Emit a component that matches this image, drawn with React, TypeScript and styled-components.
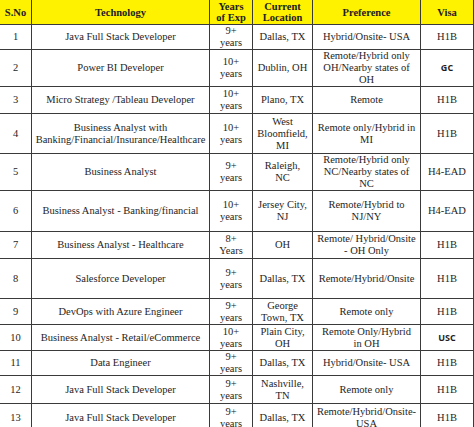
import React from 'react';
import styled, { createGlobalStyle } from 'styled-components';

const SERIF = `'Liberation Serif', serif`;
const SANS = `'Open Sans', 'Liberation Sans', sans-serif`;

const GlobalStyle = createGlobalStyle`
  html, body {
    margin: 0;
    padding: 0;
    background: #ffffff;
  }
  body {
    font-family: ${SERIF};
  }
`;

const Sheet = styled.table`
  border-collapse: collapse;
  table-layout: fixed;
  width: 474px;
  margin-left: -1px;
  margin-top: -1px;
  color: #1e1e1e;
  font-family: ${SERIF};
  font-size: 10.5px;
  line-height: 12px;
`;

const HeadCell = styled.th`
  background: #fff200;
  border: 1px solid #3a3a3a;
  font-family: ${SERIF};
  font-weight: 700;
  font-size: 10.5px;
  line-height: 11px;
  color: #202020;
  text-align: center;
  vertical-align: middle;
  padding: 0;
  white-space: nowrap;
`;

const Row = styled.tr<{ $h: number }>`
  height: ${p => p.$h}px;
`;

const Cell = styled.td<{ $sans?: boolean }>`
  border: 1px solid #3a3a3a;
  text-align: center;
  vertical-align: middle;
  padding: 0;
  white-space: nowrap;
  overflow: hidden;
  color: #1e1e1e;
  line-height: 12px;
  font-family: ${p => (p.$sans ? SANS : SERIF)};
  font-weight: ${p => (p.$sans ? 700 : 400)};
  font-size: ${p => (p.$sans ? '9px' : '10.5px')};
`;

type Job = {
  h: number;
  tech: string[];
  years: string;
  loc: string[];
  pref: string[];
  visa: string;
  sans?: boolean;
};

const jobs: Job[] = [
  { h: 25, tech: ['Java Full Stack Developer'], years: 'years', loc: ['Dallas, TX'], pref: ['Hybrid/Onsite- USA'], visa: 'H1B' },
  { h: 37, tech: ['Power BI Developer'], years: 'years', loc: ['Dublin, OH'], pref: ['Remote/Hybrid only', 'OH/Nearby states of', 'OH'], visa: 'GC', sans: true },
  { h: 27, tech: ['Micro Strategy /Tableau Developer'], years: 'years', loc: ['Plano, TX'], pref: ['Remote'], visa: 'H1B' },
  { h: 40, tech: ['Business Analyst with', 'Banking/Financial/Insurance/Healthcare'], years: 'years', loc: ['West', 'Bloomfield,', 'MI'], pref: ['Remote only/Hybrid in', 'MI'], visa: 'H1B' },
  { h: 36, tech: ['Business Analyst'], years: 'years', loc: ['Raleigh,', 'NC'], pref: ['Remote/Hybrid only', 'NC/Nearby states of', 'NC'], visa: 'H4-EAD' },
  { h: 41, tech: ['Business Analyst - Banking/financial'], years: 'years', loc: ['Jersey City,', 'NJ'], pref: ['Remote/Hybrid to', 'NJ/NY'], visa: 'H4-EAD' },
  { h: 27, tech: ['Business Analyst - Healthcare'], years: 'Years', loc: ['OH'], pref: ['Remote/ Hybrid/Onsite', '- OH Only'], visa: 'H1B' },
  { h: 40, tech: ['Salesforce Developer'], years: 'years', loc: ['Dallas, TX'], pref: ['Remote/Hybrid/Onsite'], visa: 'H1B' },
  { h: 26, tech: ['DevOps with Azure Engineer'], years: 'years', loc: ['George', 'Town, TX'], pref: ['Remote only'], visa: 'H1B' },
  { h: 26, tech: ['Business Analyst - Retail/eCommerce'], years: 'years', loc: ['Plain City,', 'OH'], pref: ['Remote Only/Hybrid', 'in OH'], visa: 'USC', sans: true },
  { h: 25, tech: ['Data Engineer'], years: 'years', loc: ['Dallas, TX'], pref: ['Hybrid/Onsite- USA'], visa: 'H1B' },
  { h: 28, tech: ['Java Full Stack Developer'], years: 'years', loc: ['Nashville,', 'TN'], pref: ['Remote only'], visa: 'H1B' },
  { h: 28, tech: ['Java Full Stack Developer'], years: 'years', loc: ['Dallas, TX'], pref: ['Remote/Hybrid/Onsite-', 'USA'], visa: 'H1B' },
];

const exp = ['9+', '10+', '10+', '10+', '9+', '10+', '8+', '9+', '9+', '10+', '9+', '9+', '9+'];

const Lines = ({ items }: { items: string[] }) => (
  <>
    {items.map((t, i) => (
      <React.Fragment key={i}>
        {i > 0 && <br />}
        {t}
      </React.Fragment>
    ))}
  </>
);

export default function App() {
  return (
    <>
      <GlobalStyle />
      <Sheet>
        <colgroup>
          <col style={{ width: 32 }} />
          <col style={{ width: 178 }} />
          <col style={{ width: 43 }} />
          <col style={{ width: 60 }} />
          <col style={{ width: 108 }} />
          <col style={{ width: 53 }} />
        </colgroup>
        <thead>
          <Row $h={25}>
            <HeadCell>S.No</HeadCell>
            <HeadCell>Technology</HeadCell>
            <HeadCell>Years<br />of Exp</HeadCell>
            <HeadCell>Current<br />Location</HeadCell>
            <HeadCell>Preference</HeadCell>
            <HeadCell>Visa</HeadCell>
          </Row>
        </thead>
        <tbody>
          {jobs.map((job, i) => (
            <Row key={i} $h={job.h}>
              <Cell>{i + 1}</Cell>
              <Cell><Lines items={job.tech} /></Cell>
              <Cell>{exp[i]}<br />{job.years}</Cell>
              <Cell><Lines items={job.loc} /></Cell>
              <Cell><Lines items={job.pref} /></Cell>
              <Cell $sans={job.sans}>{job.visa}</Cell>
            </Row>
          ))}
        </tbody>
      </Sheet>
    </>
  );
}
